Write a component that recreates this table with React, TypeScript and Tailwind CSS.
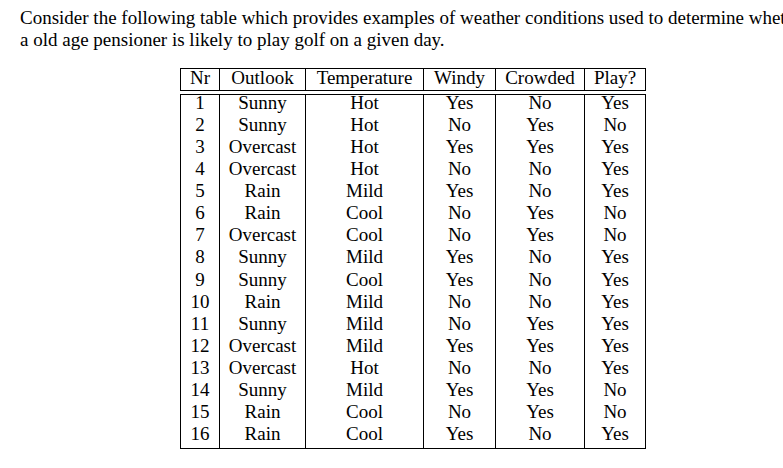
import React from "react";

const rows: string[][] = [
  ["1", "Sunny", "Hot", "Yes", "No", "Yes"],
  ["2", "Sunny", "Hot", "No", "Yes", "No"],
  ["3", "Overcast", "Hot", "Yes", "Yes", "Yes"],
  ["4", "Overcast", "Hot", "No", "No", "Yes"],
  ["5", "Rain", "Mild", "Yes", "No", "Yes"],
  ["6", "Rain", "Cool", "No", "Yes", "No"],
  ["7", "Overcast", "Cool", "No", "Yes", "No"],
  ["8", "Sunny", "Mild", "Yes", "No", "Yes"],
  ["9", "Sunny", "Cool", "Yes", "No", "Yes"],
  ["10", "Rain", "Mild", "No", "No", "Yes"],
  ["11", "Sunny", "Mild", "No", "Yes", "Yes"],
  ["12", "Overcast", "Mild", "Yes", "Yes", "Yes"],
  ["13", "Overcast", "Hot", "No", "No", "Yes"],
  ["14", "Sunny", "Mild", "Yes", "Yes", "No"],
  ["15", "Rain", "Cool", "No", "Yes", "No"],
  ["16", "Rain", "Cool", "Yes", "No", "Yes"],
];

const headers = ["Nr", "Outlook", "Temperature", "Windy", "Crowded", "Play?"];

const gridCols = "grid grid-cols-[39px_86px_118px_72px_89px_60px]";

export default function App() {
  return (
    <div
      className="w-[783px] h-[468px] overflow-hidden bg-white text-black"
      style={{ fontFamily: '"Liberation Serif", "Times New Roman", serif' }}
    >
      <div className="pl-[20px] pt-[7px] text-[19px] leading-[22px]">
        <div className="whitespace-nowrap">
          Consider the following table which provides examples of weather conditions used to determine whether
        </div>
        <div className="whitespace-nowrap">
          a old age pensioner is likely to play golf on a given day.
        </div>
      </div>
      <div className="ml-[180px] mt-[17px] w-[466px] text-[19px]">
        <div className={`${gridCols} border border-black`}>
          {headers.map((h, i) => (
            <div
              key={h}
              className={`h-[21px] leading-[17px] text-center whitespace-nowrap ${
                i < 5 ? "border-r border-black" : ""
              }`}
            >
              {h}
            </div>
          ))}
        </div>
        <div className={`${gridCols} mt-[3px] border border-black`}>
          {rows.map((r) =>
            r.map((c, i) => (
              <div
                key={r[0] + "-" + i}
                className={`h-[22.0625px] leading-[16.6px] text-center whitespace-nowrap ${
                  i < 5 ? "border-r border-black" : ""
                }`}
              >
                {c}
              </div>
            ))
          )}
        </div>
      </div>
    </div>
  );
}
